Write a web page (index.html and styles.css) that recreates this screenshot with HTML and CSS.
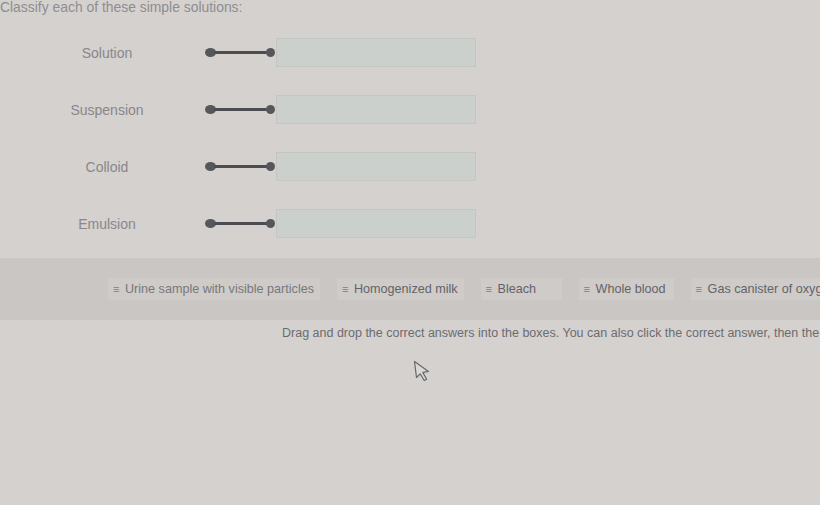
FILE: index.html
```html
<!DOCTYPE html>
<html>
<head>
<meta charset="utf-8">
<link rel="stylesheet" href="styles.css">
</head>
<body>
<div class="page">
  <div class="title">Classify each of these simple solutions:</div>
  <div class="rows">
    <div class="row">
      <div class="label">Solution</div>
      <div class="connector"><span class="dot"></span><span class="line"></span><span class="dot"></span></div>
      <div class="box"></div>
    </div>
    <div class="row">
      <div class="label">Suspension</div>
      <div class="connector"><span class="dot"></span><span class="line"></span><span class="dot"></span></div>
      <div class="box"></div>
    </div>
    <div class="row">
      <div class="label">Colloid</div>
      <div class="connector"><span class="dot"></span><span class="line"></span><span class="dot"></span></div>
      <div class="box"></div>
    </div>
    <div class="row">
      <div class="label">Emulsion</div>
      <div class="connector"><span class="dot"></span><span class="line"></span><span class="dot"></span></div>
      <div class="box"></div>
    </div>
  </div>
  <div class="band">
    <div class="chip chip-light"><span class="grip">≡</span>Urine sample with visible particles</div>
    <div class="chip"><span class="grip">≡</span>Homogenized milk</div>
    <div class="chip chip-wide"><span class="grip">≡</span>Bleach</div>
    <div class="chip chip-blood"><span class="grip">≡</span>Whole blood</div>
    <div class="chip"><span class="grip">≡</span>Gas canister of oxygen</div>
  </div>
  <div class="instructions">Drag and drop the correct answers into the boxes. You can also click the correct answer, then the</div>
  <div class="cursor-area">
    <svg class="cursor" width="20" height="22" viewBox="0 0 20 22">
      <path d="M1.5 1.5 L3.5 17.5 L7.2 13.8 L11.2 20.5 L13.6 19.2 L9.8 12.4 L15.5 11.4 Z" fill="#dcd8d6" stroke="#66676c" stroke-width="1.2" stroke-linejoin="round"/>
    </svg>
  </div>
</div>
</body>
</html>
```
FILE: styles.css
```css
html, body {
  margin: 0;
  padding: 0;
  overflow: hidden;
}
body {
  width: 820px;
  height: 505px;
  background: #d5d1cf;
  font-family: "Liberation Sans", Arial, sans-serif;
}
.page {
  width: 820px;
  height: 505px;
  display: flex;
  flex-direction: column;
  background: #d5d1cf;
}
.title {
  font-size: 13.9px;
  color: #8e8d8f;
  line-height: 15px;
  height: 38px;
}
.rows {
  display: flex;
  flex-direction: column;
  gap: 28px;
}
.row {
  display: flex;
  align-items: center;
  height: 29px;
}
.label {
  width: 186px;
  padding-left: 14px;
  text-align: center;
  font-size: 14px;
  color: #88878a;
}
.connector {
  width: 70px;
  display: flex;
  align-items: center;
  margin-left: 5px;
}
.dot {
  width: 9px;
  height: 9px;
  border-radius: 50%;
  background: #56575a;
  flex: none;
}
.connector .dot:first-child {
  width: 11px;
}
.line {
  flex: 1;
  height: 3px;
  background: #4c4d50;
  margin: 0 -2px;
}
.box {
  width: 198px;
  height: 27px;
  margin-left: 1px;
  background: #ccd0cc;
  border: 1px solid #c3c7c3;
}
.band {
  margin-top: 20px;
  height: 62px;
  background: #cac6c3;
  display: flex;
  align-items: center;
  gap: 17px;
  padding-left: 108px;
  white-space: nowrap;
  overflow: hidden;
}
.chip {
  height: 22px;
  display: flex;
  align-items: center;
  padding: 0 6px 0 5px;
  background: #cfcbc8;
  font-size: 12.6px;
  color: #62636a;
  flex: none;
}
.chip-wide {
  min-width: 70px;
}
.chip-blood {
  padding-right: 8px;
}
.chip-light {
  color: #77787d;
}
.grip {
  font-size: 11px;
  width: 7px;
  margin-right: 5px;
  color: #7c7d82;
}
.instructions {
  margin-top: 6px;
  padding-left: 282px;
  font-size: 12.5px;
  color: #6b6c70;
  white-space: nowrap;
  line-height: 14px;
}
.cursor-area {
  padding-left: 413px;
  padding-top: 20px;
}
.cursor {
  display: block;
}
```
